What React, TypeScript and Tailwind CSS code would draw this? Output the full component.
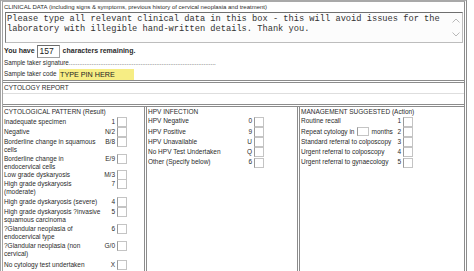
import React from 'react';

type Row = { lines: string[]; code: string; h: string; pt: string };

const leftRows: Row[] = [
  { lines: ['Inadequate specimen'], code: '1', h: 'h-[10px]', pt: 'pt-[1px]' },
  { lines: ['Negative'], code: 'N/2', h: 'h-[10px]', pt: 'pt-[1px]' },
  { lines: ['Borderline change in squamous', 'cells'], code: 'B/8', h: 'h-[18px]', pt: 'pt-[1px]' },
  { lines: ['Borderline change in', 'endocervical cells'], code: 'E/9', h: 'h-[16px]', pt: 'pt-0' },
  { lines: ['Low grade dyskaryosis'], code: 'M/3', h: 'h-[9px]', pt: 'pt-[0.5px]' },
  { lines: ['High grade dyskaryosis', '(moderate)'], code: '7', h: 'h-[17px]', pt: 'pt-[0.5px]' },
  { lines: ['High grade dyskaryosis (severe)'], code: '4', h: 'h-[10px]', pt: 'pt-[1px]' },
  { lines: ['High grade dyskaryosis ?invasive', 'squamous carcinoma'], code: '5', h: 'h-[18px]', pt: 'pt-[1px]' },
  { lines: ['?Glandular neoplasia of', 'endocervical type'], code: '6', h: 'h-[16px]', pt: 'pt-0' },
  { lines: ['?Glandular neoplasia (non', 'cervical)'], code: 'G/0', h: 'h-[18px]', pt: 'pt-[1px]' },
  { lines: ['No cytology test undertaken'], code: 'X', h: 'h-[12px]', pt: 'pt-[2px]' },
];

const hpvRows = [
  ['HPV Negative', '0'],
  ['HPV Positive', '9'],
  ['HPV Unavailable', 'U'],
  ['No HPV Test Undertaken', 'Q'],
  ['Other (Specify below)', '6'],
];

const mgmtRows = [
  ['Routine recall', '1'],
  ['Repeat cytology in', '2'],
  ['Standard referral to colposcopy', '3'],
  ['Urgent referral to colposcopy', '4'],
  ['Urgent referral to gynaecology', '5'],
];

function Box() {
  return <div className="w-[10px] h-[10px] border border-[#c4c4c4] border-l-[#9a9a9a] bg-white shrink-0" />;
}

function Chevron({ up }: { up?: boolean }) {
  return (
    <svg width="8" height="5" viewBox="0 0 8 5" className="block">
      <path d={up ? 'M0.5 4.5 L4 1 L7.5 4.5' : 'M0.5 0.5 L4 4 L7.5 0.5'} fill="none" stroke="#b9b9b9" strokeWidth="1" />
    </svg>
  );
}

export default function App() {
  return (
    <div className="w-[474px] h-[271px] overflow-hidden bg-white text-[#2b2b2b] font-['Liberation_Sans',Arial,sans-serif]">
      <div className="w-[467px] h-[271px] flex flex-col border-t-2 border-t-[#a9a9a9] border-l-[3px] border-l-[#a3a3a3] border-double border-r-[3px] border-r-[#8c8c8c]">
        {/* clinical data */}
        <div className="h-[81px] border-b-[3px] border-double border-b-[#8c8c8c] pl-[1px]">
          <div className="h-[10px] flex items-center text-[6px] leading-none whitespace-nowrap">
            CLINICAL DATA (including signs &amp; symptoms, previous history of cervical neoplasia and treatment)
          </div>
          <div className="relative ml-[1px] w-[458px] h-[31px] border border-[#bdbdbd] border-t-[#6f6f6f] border-l-[#7c7c7c] bg-[#fcfcfc]">
            <div className="pl-[1px] pt-[1px] font-['Liberation_Mono','Courier_New',monospace] text-[8.7px] leading-[10px] text-[#333] whitespace-pre">
              {'Please type all relevant clinical data in this box - this will avoid issues for the\nlaboratory with illegible hand-written details. Thank you.'}
            </div>
            <div className="absolute right-[2px] top-[5px] flex flex-col gap-[9px]">
              <Chevron up />
              <Chevron />
            </div>
          </div>
          <div className="mt-[2px] h-[13px] flex items-center gap-[2px] text-[7px] font-bold">
            <span>You have</span>
            <div className="w-[23px] h-[13px] border border-[#a0a0a0] border-t-[#6a6a6a] border-l-[#7a7a7a] flex items-center pl-[2px] font-normal text-[8.5px] text-[#222]">
              157
            </div>
            <span className="ml-[1px]">characters remaining.</span>
          </div>
          <div className="h-[11px] flex items-center text-[6.3px] leading-none whitespace-nowrap">
            <span>Sample taker signature</span>
            <span className="text-[#555]">{'.'.repeat(84)}</span>
          </div>
          <div className="h-[11px] flex items-center text-[6.3px] leading-none whitespace-nowrap">
            <span className="w-[55px] shrink-0">Sample taker code</span>
            <div className="w-[75px] h-[11px] bg-[#f6ed84] flex items-center pl-[1px] text-[7.2px] text-[#222]">TYPE PIN HERE</div>
          </div>
        </div>

        {/* cytology report */}
        <div className="h-[24px] border-b-[3px] border-double border-b-[#8c8c8c]">
          <div className="h-[11px] border-b border-b-[#dedede] flex items-center pl-[1px] text-[6.5px] leading-none">
            CYTOLOGY REPORT
          </div>
        </div>

        {/* columns */}
        <div className="flex flex-1 text-[6.5px]">
          <div className="w-[144px] border-r-[3px] border-double border-r-[#8c8c8c] pl-[1px]">
            <div className="h-[9.5px] flex items-center leading-none">CYTOLOGICAL PATTERN (Result)</div>
            {leftRows.map((r) => (
              <div key={r.code} className={`flex items-start ${r.h} ${r.pt}`}>
                <div className="w-[97px] leading-[8px] whitespace-nowrap">
                  {r.lines.map((l) => (
                    <div key={l}>{l}</div>
                  ))}
                </div>
                <div className="w-[14px] text-right leading-[8px] mr-[2px]">{r.code}</div>
                <div className="-mt-[1px]">
                  <Box />
                </div>
              </div>
            ))}
          </div>
          <div className="w-[153px] border-r-[3px] border-double border-r-[#8c8c8c] pl-[1px]">
            <div className="h-[9.5px] flex items-center leading-none">HPV INFECTION</div>
            {hpvRows.map(([l, c]) => (
              <div key={l} className="h-[10.25px] flex items-center leading-none">
                <div className="w-[96px] whitespace-nowrap">{l}</div>
                <div className="w-[8px] text-right mr-[2px]">{c}</div>
                <Box />
              </div>
            ))}
          </div>
          <div className="flex-1 pl-[1px]">
            <div className="h-[9.5px] flex items-center leading-none">MANAGEMENT SUGGESTED (Action)</div>
            {mgmtRows.map(([l, c]) => (
              <div key={l} className="h-[10.25px] flex items-center leading-none">
                <div className="w-[92px] flex items-center whitespace-nowrap">
                  <span>{l}</span>
                  {c === '2' && (
                    <>
                      <div className="ml-[3px] w-[12px] h-[9px] border border-[#c4c4c4] border-l-[#9a9a9a]" />
                      <span className="ml-[2px]">months</span>
                    </>
                  )}
                </div>
                <div className="w-[8px] text-right mr-[2px]">{c}</div>
                <Box />
              </div>
            ))}
          </div>
        </div>
      </div>
    </div>
  );
}
